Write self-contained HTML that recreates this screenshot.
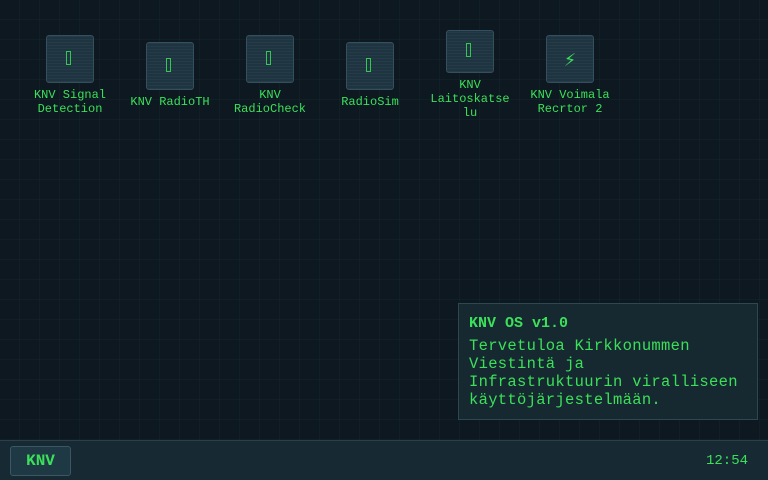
<!DOCTYPE html>
<html><head><meta charset="utf-8"><style>
*{margin:0;padding:0;box-sizing:border-box}
body{width:768px;height:480px;overflow:hidden;background:#0d1820;font-family:"Liberation Mono",monospace;color:#3be05a;position:relative;
background-image:linear-gradient(rgba(40,70,80,.14) 1px,transparent 1px),linear-gradient(90deg,rgba(40,70,80,.14) 1px,transparent 1px);background-size:20px 20px;background-position:0 -1px,-1px 0}
.ic{position:absolute;width:48px;height:48px;background:#1e3541;border:1px solid #33505c;border-radius:3px;
background-image:repeating-linear-gradient(0deg,rgba(255,255,255,.03) 0 1px,transparent 1px 3px)}
.ic i{position:absolute;left:19px;top:15px;width:5px;height:14px;border:1px solid #33c850}
.ic b{position:absolute;left:0;right:0;top:11px;text-align:center;font-size:20px;font-weight:normal;color:#3be05a}
.lb{position:absolute;width:100px;text-align:center;font-size:12px;line-height:14px}
.note{position:absolute;left:458px;top:303px;width:300px;height:117px;background:#162830;border:1px solid #2d4850}
.note h1{position:absolute;left:10px;top:11px;font-size:15px;font-weight:bold}
.note p{position:absolute;left:10px;top:33px;font-size:15.5px;line-height:18px;letter-spacing:.3px}
.bar{position:absolute;left:0;top:440px;width:768px;height:40px;background:#172a33;border-top:1px solid #2a404a}
.btn{position:absolute;left:10px;top:5px;width:61px;height:30px;background:#1e3844;border:1px solid #3a5763;border-radius:3px;text-align:center;font-weight:bold;font-size:16px;line-height:28px}
.clk{position:absolute;right:20px;top:12px;font-size:14px}
</style></head><body>
<div class="ic" style="left:46px;top:35px"><i></i></div>
<div class="lb" style="left:20px;top:88px">KNV Signal<br>Detection</div>
<div class="ic" style="left:146px;top:42px"><i></i></div>
<div class="lb" style="left:120px;top:95px">KNV RadioTH</div>
<div class="ic" style="left:246px;top:35px"><i></i></div>
<div class="lb" style="left:220px;top:88px">KNV<br>RadioCheck</div>
<div class="ic" style="left:346px;top:42px"><i></i></div>
<div class="lb" style="left:320px;top:95px">RadioSim</div>
<div class="ic" style="left:446px;top:30px;height:43px"><i style="top:12px"></i></div>
<div class="lb" style="left:420px;top:78px">KNV<br>Laitoskatse<br>lu</div>
<div class="ic" style="left:546px;top:35px"><b>⚡</b></div>
<div class="lb" style="left:520px;top:88px">KNV Voimala<br>Recrtor 2</div>
<div class="note"><h1>KNV OS v1.0</h1><p>Tervetuloa Kirkkonummen<br>Viestintä ja<br>Infrastruktuurin viralliseen<br>käyttöjärjestelmään.</p></div>
<div class="bar"><div class="btn">KNV</div><div class="clk">12:54</div></div>
</body></html>
